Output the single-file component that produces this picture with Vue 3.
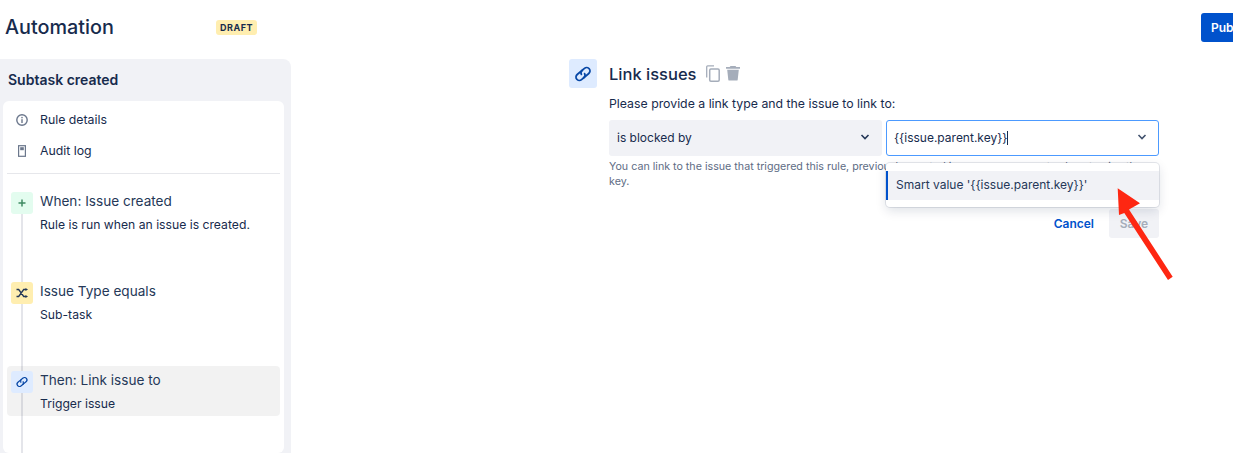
<template>
  <div class="page">
    <header class="top">
      <h1 class="title">Automation</h1>
      <span class="badge">DRAFT</span>
      <button class="publish">Publish rule</button>
    </header>

    <div class="content">
      <aside class="side">
        <div class="rule-name">Subtask created</div>
        <div class="panel">
          <div class="nav-item">
            <svg width="14" height="14" viewBox="0 0 14 14" fill="none">
              <circle cx="7" cy="7" r="5.2" stroke="#6b778c" stroke-width="1.4" />
              <rect x="6.3" y="6.2" width="1.4" height="3.8" fill="#6b778c" />
              <rect x="6.3" y="3.9" width="1.4" height="1.4" fill="#6b778c" />
            </svg>
            <span>Rule details</span>
          </div>
          <div class="nav-item">
            <svg width="14" height="14" viewBox="0 0 14 14" fill="none">
              <rect x="3.6" y="1.7" width="6.8" height="10.6" stroke="#6b778c" stroke-width="1.2" />
              <rect x="5.2" y="3.2" width="3.6" height="3" fill="#6b778c" />
            </svg>
            <span>Audit log</span>
          </div>
          <div class="divider"></div>

          <div class="steps">
            <div v-for="step in steps" :key="step.title" class="step" :class="{ active: step.active }">
              <div class="step-icon" :class="step.kind">
                <svg v-if="step.kind === 'when'" width="10" height="10" viewBox="0 0 10 10">
                  <path d="M5 1.5v7M1.5 5h7" stroke="#3f8a63" stroke-width="1.5" />
                </svg>
                <svg v-else-if="step.kind === 'cond'" width="14" height="12" viewBox="0 0 14 12" fill="none" stroke="#253858" stroke-width="1.3">
                  <path d="M1.500 2.500h2.200l5 7H11M1.500 9.500h2.200l5-7H11" />
                  <path d="M10.500 1 13 2.500 10.500 4zM10.500 8 13 9.500 10.500 11z" fill="#253858" stroke="none" />
                </svg>
                <svg v-else width="14" height="14" viewBox="-8 -8 16 16" fill="none" stroke="#0747a6" stroke-width="1.400" stroke-linecap="round">
                  <g transform="rotate(-40)">
                    <path d="M1.500 -2.700H-3.800A2.700 2.700 0 0 0 -3.800 2.700H-1.500A2.700 2.700 0 0 0 1.200 0.600" />
                    <path d="M-1.500 2.700H3.800A2.700 2.700 0 0 0 3.800 -2.700H1.500A2.700 2.700 0 0 0 -1.200 -0.600" />
                  </g>
                </svg>
              </div>
              <div class="step-text">
                <div class="step-title">{{ step.title }}</div>
                <div class="step-desc">{{ step.desc }}</div>
              </div>
            </div>
          </div>
        </div>
      </aside>

      <main class="editor">
        <div class="editor-icon">
          <svg width="20" height="20" viewBox="-8 -8 16 16" fill="none" stroke="#0747a6" stroke-width="1.400" stroke-linecap="round">
            <g transform="rotate(-40)">
              <path d="M1.500 -2.700H-3.800A2.700 2.700 0 0 0 -3.800 2.700H-1.500A2.700 2.700 0 0 0 1.200 0.600" />
              <path d="M-1.500 2.700H3.800A2.700 2.700 0 0 0 3.800 -2.700H1.500A2.700 2.700 0 0 0 -1.200 -0.600" />
            </g>
          </svg>
        </div>
        <div class="form">
          <div class="form-head">
            <h2>Link issues</h2>
            <svg class="tool" width="14" height="17" viewBox="0 0 14 17" fill="none">
              <path d="M0.700 12.500V1.800a1 1 0 0 1 1-1H8" stroke="#a5adba" stroke-width="1.300" />
              <rect x="3.700" y="4" width="9.500" height="12.200" rx="1.200" stroke="#a5adba" stroke-width="1.500" />
            </svg>
            <svg class="tool" width="14" height="15" viewBox="1 1 14 15">
              <path d="M5.500 1h5l.8 1H15v1.700H1V2h3.700zM2.200 4.700h11.600l-1.100 10a1 1 0 0 1-1 .9H4.300a1 1 0 0 1-1-.9z" fill="#a5adba" />
            </svg>
          </div>
          <div class="label">Please provide a link type and the issue to link to:</div>
          <div class="fields">
            <div class="select">
              <span>is blocked by</span>
              <svg width="10" height="6" viewBox="0 0 10 6" fill="none"><path d="M1.500 1 5 4.500 8.500 1" stroke="#253858" stroke-width="1.600" /></svg>
            </div>
            <div class="select focused">
              <span>{{ issueValue }}<i class="caret"></i></span>
              <svg width="10" height="6" viewBox="0 0 10 6" fill="none"><path d="M1.500 1 5 4.500 8.500 1" stroke="#42526e" stroke-width="1.600" /></svg>

              <div class="menu">
                <div class="option">Smart value '{{ issueValue }}'</div>
              </div>
            </div>
          </div>
          <p class="help">You can link to the issue that triggered this rule, previously created issues, or use smart values to give the<br>key.</p>
          <div class="actions">
            <a class="cancel">Cancel</a>
            <button class="save">Save</button>
          </div>
        </div>
      </main>
    </div>

    <svg class="arrow" width="75" height="110" viewBox="0 0 75 110">
      <path d="M12.700 13.300 35 28.300 24 34.500 67.700 101.700 63 105 19.300 38 14 40z" fill="#fe2712" />
    </svg>
  </div>
</template>

<script setup>
const issueValue = '{{issue.parent.key}}'

const steps = [
  { kind: 'when', title: 'When: Issue created', desc: 'Rule is run when an issue is created.' },
  { kind: 'cond', title: 'Issue Type equals', desc: 'Sub-task' },
  { kind: 'then', title: 'Then: Link issue to', desc: 'Trigger issue', active: true }
]
</script>

<style>
html, body {
  margin: 0;
  background: #fff;
  overflow: hidden;
}
</style>

<style scoped>
.page {
  position: relative;
  width: 1233px;
  height: 453px;
  overflow: hidden;
  font-family: Inter, "Liberation Sans", sans-serif;
  color: #172b4d;
  font-size: 12.3px;
}

.top {
  display: flex;
  align-items: center;
  height: 59px;
  padding: 0 0 5px 5px;
  box-sizing: border-box;
  position: relative;
}

.title {
  margin: 0;
  font-size: 19.8px;
  font-weight: 500;
  width: 211px;
}

.badge {
  background: #ffeeb0;
  color: #172b4d;
  font-size: 9px;
  font-weight: 700;
  letter-spacing: 0.5px;
  padding: 2px 4px;
  border-radius: 3px;
  line-height: 11px;
}

.publish {
  margin-left: auto;
  margin-right: -60px;
  width: 92px;
  height: 29px;
  background: #0052cc;
  color: #fff;
  border: 0;
  border-radius: 3px;
  font: 600 12px Inter, sans-serif;
  text-align: left;
  padding-left: 10px;
}

.content {
  display: flex;
}

.side {
  width: 291px;
  height: 394px;
  background: #f1f2f6;
  border-radius: 0 8px 0 0;
  flex: none;
  padding: 0 7px 0 3px;
  box-sizing: border-box;
}

.rule-name {
  font-size: 14px;
  font-weight: 600;
  height: 42px;
  line-height: 42px;
  padding-left: 5px;
}

.panel {
  background: #fff;
  border-radius: 6px;
  height: 352px;
  padding: 3px 4px 0;
  box-sizing: border-box;
  overflow: hidden;
}

.nav-item {
  display: flex;
  align-items: center;
  gap: 11px;
  height: 31px;
  padding-left: 8px;
}

.divider {
  height: 1px;
  background: #e6e7eb;
  margin: 7px 0 0;
}

.steps {
  position: relative;
  padding-top: 13px;
}

.steps::before {
  content: "";
  position: absolute;
  left: 14px;
  top: 40px;
  bottom: -60px;
  width: 2px;
  background: #e4e5ea;
}

.step {
  position: relative;
  display: flex;
  height: 50px;
  margin-bottom: 40px;
  border-radius: 4px;
  padding-left: 4px;
  gap: 7px;
}

.step.active {
  background: rgba(0, 0, 0, 0.05);
  margin-top: -1px;
}

.step-icon {
  flex: none;
  width: 22px;
  height: 22px;
  margin-top: 5px;
  border-radius: 3px;
  display: flex;
  align-items: center;
  justify-content: center;
}

.when { background: #e3fcef; }
.cond { background: #ffeeb0; }
.then { background: #deebff; }

.step-title {
  font-size: 13.6px;
  line-height: 18px;
  margin-top: 5px;
  color: #253858;
}

.step-desc {
  font-size: 12.2px;
  line-height: 16px;
  margin-top: 7px;
}

.editor {
  display: flex;
  margin-left: 278px;
  gap: 12px;
}

.editor-icon {
  width: 28px;
  height: 29px;
  flex: none;
  background: #deebff;
  border-radius: 3px;
  display: flex;
  align-items: center;
  justify-content: center;
}

.form {
  width: 550px;
}

.form-head {
  display: flex;
  align-items: center;
  height: 29px;
  gap: 6px;
}

.form-head h2 {
  margin: 0 4px 0 0;
  font-size: 16.5px;
  font-weight: 500;
}

.label {
  margin-top: 8px;
  line-height: 16px;
}

.fields {
  display: flex;
  gap: 4px;
  margin-top: 8px;
  font-size: 12px;
}

.select {
  position: relative;
  flex: 1;
  height: 36px;
  box-sizing: border-box;
  background: #f1f2f6;
  border-radius: 3px;
  display: flex;
  align-items: center;
  justify-content: space-between;
  padding: 0 12px 2px 8px;
}

.select.focused {
  background: #fff;
  border: 1px solid #4c9aff;
  padding: 0 11px 2px 7px;
}

.caret {
  display: inline-block;
  width: 1px;
  height: 14px;
  background: #172b4d;
  vertical-align: -3px;
}

.menu {
  position: absolute;
  left: -1px;
  right: -1px;
  top: 42px;
  height: 44px;
  background: #fff;
  border-radius: 4px;
  box-shadow: 0 0 0 1px rgba(9, 30, 66, 0.1), 0 4px 11px rgba(9, 30, 66, 0.13);
  padding-top: 8px;
  box-sizing: border-box;
  z-index: 2;
}

.option {
  height: 29px;
  line-height: 27px;
  background: #f1f2f6;
  border-left: 2px solid #0052cc;
  padding-left: 8px;
  color: #253858;
}

.help {
  margin: 3px 0 0;
  font-size: 10.7px;
  line-height: 15px;
  color: #5e6c84;
}

.actions {
  display: flex;
  align-items: center;
  justify-content: flex-end;
  gap: 15px;
  margin-top: 20px;
  font-size: 12px;
}

.cancel {
  color: #0052cc;
  font-weight: 600;
}

.save {
  width: 50px;
  height: 29px;
  border: 0;
  border-radius: 3px;
  background: #f1f2f6;
  color: #a5adba;
  font: 600 12px Inter, sans-serif;
}

.arrow {
  position: absolute;
  left: 1105px;
  top: 175px;
  z-index: 3;
}
</style>
